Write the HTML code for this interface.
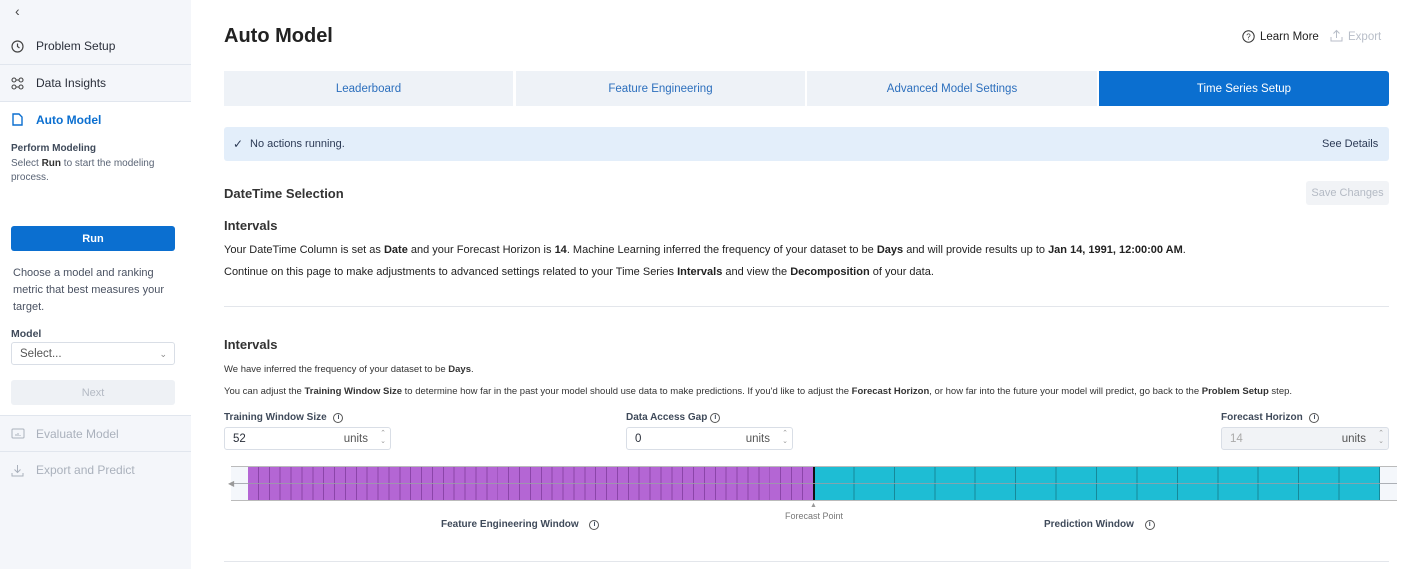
<!DOCTYPE html><html><head><meta charset="utf-8"><style>
*{box-sizing:border-box;margin:0;padding:0}
body{width:1413px;height:569px;overflow:hidden;font-family:"Liberation Sans",sans-serif;color:#2a2f3a;background:#fff;position:relative;font-size:11px}
.a{position:absolute}
.side{left:0;top:0;width:191px;height:569px;background:#f4f6fa}
.nav{left:0;width:191px;height:37px;border-bottom:1px solid #e1e6ee;font-size:12px;color:#2a2f3a;padding-left:36px;line-height:37px}
.ic{position:absolute;left:11px;top:12px}
.tab{top:71px;height:35px;background:#eef2f7;color:#2c6fbd;font-size:11.5px;text-align:center;line-height:37px}
b{font-weight:bold}
.inp{height:23px;border:1px solid #d9dee6;border-radius:3px;background:#fff;font-size:11.5px;line-height:22px;padding-left:8px}
.u{position:absolute;right:22px;top:0;color:#555}
.sp{position:absolute;right:4px;top:2px;color:#999;font-size:7px;line-height:8px}
.i{display:inline-block;width:10px;height:10px;border:1px solid #555;border-radius:50%;font-size:7px;line-height:8px;text-align:center;vertical-align:top;position:relative;top:1px;font-weight:bold;margin-left:4px}
</style></head><body>
<div class="a side"></div>
<div class="a" style="left:0;top:101px;width:191px;height:314px;background:#fff"></div>
<div class="a" style="left:15px;top:3px;font-size:14px;color:#444">‹</div>
<div class="a nav" style="top:28px;border-top:0"><svg class="ic" width="13" height="13" viewBox="0 0 13 13"><circle cx="6.5" cy="6.5" r="5.5" fill="none" stroke="#444" stroke-width="1.2"/><path d="M6.5 3.5v3l2 1.5" fill="none" stroke="#444" stroke-width="1.2"/></svg>Problem Setup</div>
<div class="a nav" style="top:65px"><svg class="ic" width="13" height="13" viewBox="0 0 13 13" fill="none" stroke="#444" stroke-width="1.1"><circle cx="3" cy="3" r="2"/><circle cx="10" cy="3" r="2"/><circle cx="3" cy="10" r="2"/><circle cx="10" cy="10" r="2"/><path d="M5 3h3M5 10h3"/></svg>Data Insights</div>
<div class="a" style="left:36px;top:113px;font-size:12px;color:#0b6fd0;font-weight:bold">Auto Model</div>
<svg class="a" style="left:12px;top:113px" width="11" height="13" viewBox="0 0 11 13"><path d="M1 1h6l3 3v8H1z" fill="none" stroke="#0b6fd0" stroke-width="1.4"/></svg>
<div class="a" style="left:11px;top:143px;font-size:10px;color:#3f4a5a;font-weight:bold">Perform Modeling</div>
<div class="a" style="left:11px;top:157px;font-size:10px;color:#5a6475;line-height:14px;width:150px">Select <b style="color:#333">Run</b> to start the modeling process.</div>
<div class="a" style="left:11px;top:226px;width:164px;height:25px;background:#0b6fd0;border-radius:3px;color:#fff;font-weight:bold;font-size:11px;text-align:center;line-height:26px">Run</div>
<div class="a" style="left:13px;top:265px;width:160px;font-size:11px;color:#4a5262;line-height:17px">Choose a model and ranking metric that best measures your target.</div>
<div class="a" style="left:11px;top:328px;font-size:10.5px;font-weight:bold;color:#3f4a5a">Model</div>
<div class="a inp" style="left:11px;top:342px;width:164px;color:#555">Select...<span style="position:absolute;right:7px;top:0;color:#888;font-size:9px">⌄</span></div>
<div class="a" style="left:11px;top:380px;width:164px;height:25px;background:#eef1f5;border-radius:3px;color:#b4bac4;font-size:11px;text-align:center;line-height:26px">Next</div>
<div class="a nav" style="top:415px;color:#aab1bc;border-top:1px solid #e1e6ee">Evaluate Model<svg class="ic" width="14" height="12" viewBox="0 0 14 12" fill="none" stroke="#aab1bc"><rect x="1" y="1" width="12" height="9" rx="1"/><path d="M5 8v-2M7 8v-3M9 8v-1"/></svg></div>
<div class="a nav" style="top:452px;color:#aab1bc;border-bottom:0">Export and Predict<svg class="ic" width="13" height="13" viewBox="0 0 13 13" fill="none" stroke="#aab1bc"><path d="M6.5 1v7M3.5 5.5l3 3 3-3M1 9v3h11V9"/></svg></div>

<div class="a" style="left:224px;top:25px;font-size:20px;font-weight:bold;color:#222">Auto Model</div>
<svg class="a" style="left:1242px;top:30px" width="13" height="13" viewBox="0 0 13 13"><circle cx="6.5" cy="6.5" r="5.7" fill="none" stroke="#333"/><text x="6.5" y="9.5" font-size="8" text-anchor="middle" font-family="Liberation Sans" fill="#333">?</text></svg>
<div class="a" style="left:1260px;top:31px;font-size:11.5px;color:#222">Learn More</div>
<svg class="a" style="left:1330px;top:29px" width="13" height="13" viewBox="0 0 13 13" fill="none" stroke="#b8bec8"><path d="M6.5 9V1.5M3.5 4.5l3-3 3 3M1 8v4h11V8"/></svg>
<div class="a" style="left:1348px;top:31px;font-size:11.5px;color:#b8bec8">Export</div>

<div class="a tab" style="left:224px;width:289px">Leaderboard</div>
<div class="a tab" style="left:516px;width:289px">Feature Engineering</div>
<div class="a tab" style="left:807px;width:290px">Advanced Model Settings</div>
<div class="a tab" style="left:1099px;width:290px;background:#0b6fd0;color:#fff;border-radius:0 3px 3px 0">Time Series Setup</div>

<div class="a" style="left:224px;top:127px;width:1165px;height:34px;background:#e3eefa;border-radius:3px"></div>
<div class="a" style="left:233px;top:137px;font-size:12px;color:#2c3a55">✓</div>
<div class="a" style="left:250px;top:138px;font-size:11px;color:#2c3a55">No actions running.</div>
<div class="a" style="left:1322px;top:138px;font-size:11px;color:#2c3a55">See Details</div>

<div class="a" style="left:224px;top:186px;font-size:13px;font-weight:bold;color:#333">DateTime Selection</div>
<div class="a" style="left:1306px;top:181px;width:83px;height:24px;background:#f1f3f6;border-radius:3px;color:#b4bac4;font-size:11px;text-align:center;line-height:25px">Save Changes</div>
<div class="a" style="left:224px;top:218px;font-size:13px;font-weight:bold;color:#333">Intervals</div>
<div class="a" style="left:224px;top:244px;font-size:11px;color:#222">Your DateTime Column is set as <b>Date</b> and your Forecast Horizon is <b>14</b>. Machine Learning inferred the frequency of your dataset to be <b>Days</b> and will provide results up to <b>Jan 14, 1991, 12:00:00 AM</b>.</div>
<div class="a" style="left:224px;top:266px;font-size:11px;color:#222">Continue on this page to make adjustments to advanced settings related to your Time Series <b>Intervals</b> and view the <b>Decomposition</b> of your data.</div>
<div class="a" style="left:224px;top:306px;width:1165px;height:1px;background:#e3e6eb"></div>

<div class="a" style="left:224px;top:337px;font-size:13px;font-weight:bold;color:#333">Intervals</div>
<div class="a" style="left:224px;top:364px;font-size:9.5px;color:#333">We have inferred the frequency of your dataset to be <b>Days</b>.</div>
<div class="a" style="left:224px;top:386px;font-size:9.5px;color:#333">You can adjust the <b>Training Window Size</b> to determine how far in the past your model should use data to make predictions. If you'd like to adjust the <b>Forecast Horizon</b>, or how far into the future your model will predict, go back to the <b>Problem Setup</b> step.</div>

<div class="a" style="left:224px;top:412px;font-size:10px;font-weight:bold;color:#3f4a5a">Training Window Size <span class="i" style="margin-left:4px">i</span></div>
<div class="a inp" style="left:224px;top:427px;width:167px">52<span class="u">units</span><span class="sp">⌃<br>⌄</span></div>
<div class="a" style="left:626px;top:412px;font-size:10px;font-weight:bold;color:#3f4a5a">Data Access Gap<span class="i" style="margin-left:3px">i</span></div>
<div class="a inp" style="left:626px;top:427px;width:167px">0<span class="u">units</span><span class="sp">⌃<br>⌄</span></div>
<div class="a" style="left:1221px;top:412px;font-size:10px;font-weight:bold;color:#3f4a5a">Forecast Horizon <span class="i" style="margin-left:4px">i</span></div>
<div class="a inp" style="left:1221px;top:427px;width:168px;background:#f1f3f6;color:#aaa">14<span class="u">units</span><span class="sp">⌃<br>⌄</span></div>

<div class="a" style="left:231px;top:466px;width:1166px;height:35px;border-top:1px solid #bbb;border-bottom:1px solid #bbb;background:#f4f7fb"></div>
<div class="a" style="left:248px;top:467px;width:566px;height:33px;background:repeating-linear-gradient(90deg,#b466d4 0 9.9px,#8b45a9 9.9px 10.88px)"></div>
<div class="a" style="left:814px;top:467px;width:566px;height:33px;background:repeating-linear-gradient(90deg,#1ebdd4 0 39.4px,#16899a 39.4px 40.43px)"></div>
<div class="a" style="left:813px;top:467px;width:2px;height:33px;background:#111"></div>
<div class="a" style="left:231px;top:483px;width:1166px;height:1px;background:#9a9ea5;opacity:.8"></div>
<div class="a" style="left:228px;top:479px;font-size:8px;color:#999">◀</div>
<div class="a" style="left:810px;top:502px;font-size:7px;color:#999">▲</div>
<div class="a" style="left:785px;top:511px;font-size:9px;color:#777">Forecast Point</div>
<div class="a" style="left:441px;top:519px;font-size:10px;font-weight:bold;color:#3f4a5a">Feature Engineering Window <span class="i" style="margin-left:8px">i</span></div>
<div class="a" style="left:1044px;top:519px;font-size:10px;font-weight:bold;color:#3f4a5a">Prediction Window <span class="i" style="margin-left:8px">i</span></div>
<div class="a" style="left:224px;top:561px;width:1165px;height:1px;background:#e3e6eb"></div>
</body></html>
